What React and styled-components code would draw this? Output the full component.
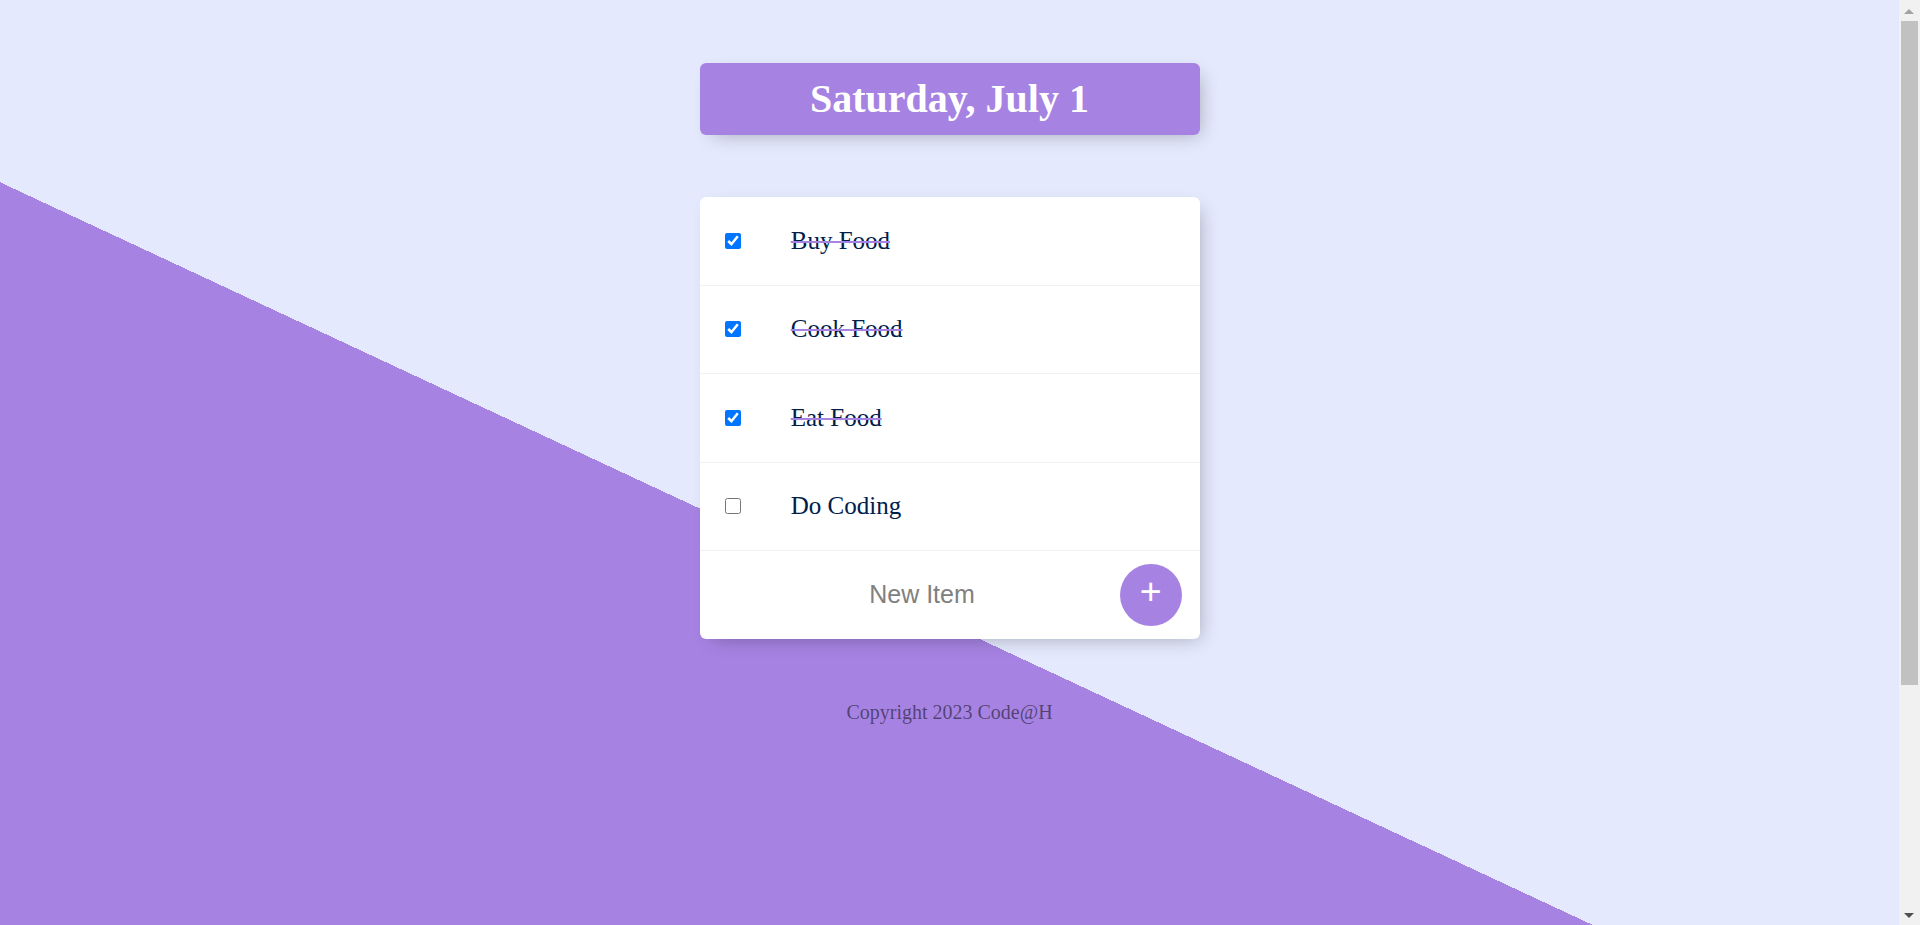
import React, { useState } from "react";
import styled, { createGlobalStyle } from "styled-components";

const GlobalStyle = createGlobalStyle`
  html {
    width: calc(100% - 21px);
    background-color: #e4e9fd;
    background-image: linear-gradient(25deg, #a683e3 50%, #e4e9fd 50%);
    min-height: 1250px;
    font-family: "Liberation Serif", "Times New Roman", serif;
  }
  body {
    margin: 0 10px;
  }
`;

const Box = styled.div`
  max-width: 500px;
  margin: 62.5px auto;
  background: #ffffff;
  border-radius: 6.25px;
  box-shadow: 6.25px 6.25px 18.75px -6.25px rgba(0, 0, 0, 0.3);
`;

const Heading = styled(Box)`
  background-color: #a683e3;
  text-align: center;
`;

const Title = styled.h1`
  margin: 0;
  padding: 12.5px;
  color: #ffffff;
  font-size: 40px;
  font-weight: bold;
`;

const Row = styled.div`
  min-height: 87.5px;
  display: flex;
  align-items: center;
  border-bottom: 1px solid #f1f1f1;
`;

const Check = styled.input`
  margin: 25px;
  width: 16.25px;
  height: 16.25px;
  flex-shrink: 0;
`;

const ItemText = styled.p`
  margin: 0;
  padding: 25px;
  font-size: 25px;
  font-weight: 200;
  color: #00204a;
  text-decoration: ${(p) => (p.$done ? "line-through" : "none")};
  text-decoration-color: #a683e3;
  text-decoration-thickness: 2px;
`;

const NewItemForm = styled.form`
  min-height: 87.5px;
  display: flex;
  align-items: center;
  text-align: center;
  margin-left: 25px;
`;

const TextInput = styled.input`
  text-align: center;
  height: 75px;
  border: none;
  background: transparent;
  font-family: "Liberation Sans", Arial, sans-serif;
  font-size: 25px;
  font-weight: 200;
  width: 391px;
  padding: 1px 2px;
  &:focus {
    outline: none;
    box-shadow: inset 0 -3px 0 0 #a683e3;
  }
  &::placeholder {
    color: grey;
    opacity: 1;
  }
`;

const AddButton = styled.button`
  min-height: 62.5px;
  width: 62.5px;
  border-radius: 50%;
  border: 0;
  background-color: #a683e3;
  color: #ffffff;
  font-family: "Liberation Sans", Arial, sans-serif;
  font-size: 37.5px;
  padding: 0 0 7.5px;
  cursor: pointer;
`;

const Footer = styled.footer`
  color: rgba(0, 0, 0, 0.5);
  text-align: center;
  font-size: 20px;
`;

/* stand-in for the browser scrollbar seen in the screenshot */
const ScrollTrack = styled.div`
  position: fixed;
  top: 0;
  right: 0;
  width: 21px;
  height: 100vh;
  background: #f1f1f1;
`;

const ScrollThumb = styled.div`
  position: absolute;
  top: 21px;
  left: 2px;
  width: 17px;
  height: 664px;
  background: #c1c1c1;
`;

const Arrow = styled.div`
  position: absolute;
  left: 5px;
  width: 0;
  height: 0;
  border-left: 5px solid transparent;
  border-right: 5px solid transparent;
  ${(p) =>
    p.$down
      ? "bottom: 7px; border-top: 5px solid #505050;"
      : "top: 9px; border-bottom: 5px solid #a3a3a3;"}
`;

const initialItems = [
  { id: 1, name: "Buy Food", done: true },
  { id: 2, name: "Cook Food", done: true },
  { id: 3, name: "Eat Food", done: true },
  { id: 4, name: "Do Coding", done: false },
];

export default function App() {
  const [items, setItems] = useState(initialItems);
  const [newItem, setNewItem] = useState("");

  const toggle = (id) =>
    setItems(items.map((it) => (it.id === id ? { ...it, done: !it.done } : it)));

  const addItem = (e) => {
    e.preventDefault();
    if (!newItem.trim()) return;
    setItems([...items, { id: Date.now(), name: newItem, done: false }]);
    setNewItem("");
  };

  return (
    <>
      <GlobalStyle />
      <Heading>
        <Title>Saturday, July 1</Title>
      </Heading>
      <Box>
        {items.map((item) => (
          <Row key={item.id}>
            <Check
              type="checkbox"
              checked={item.done}
              onChange={() => toggle(item.id)}
            />
            <ItemText $done={item.done}>{item.name}</ItemText>
          </Row>
        ))}
        <NewItemForm onSubmit={addItem}>
          <TextInput
            type="text"
            placeholder="New Item"
            autoComplete="off"
            value={newItem}
            onChange={(e) => setNewItem(e.target.value)}
          />
          <AddButton type="submit">+</AddButton>
        </NewItemForm>
      </Box>
      <Footer>Copyright 2023 Code@H</Footer>
      <ScrollTrack>
        <Arrow />
        <ScrollThumb />
        <Arrow $down />
      </ScrollTrack>
    </>
  );
}
